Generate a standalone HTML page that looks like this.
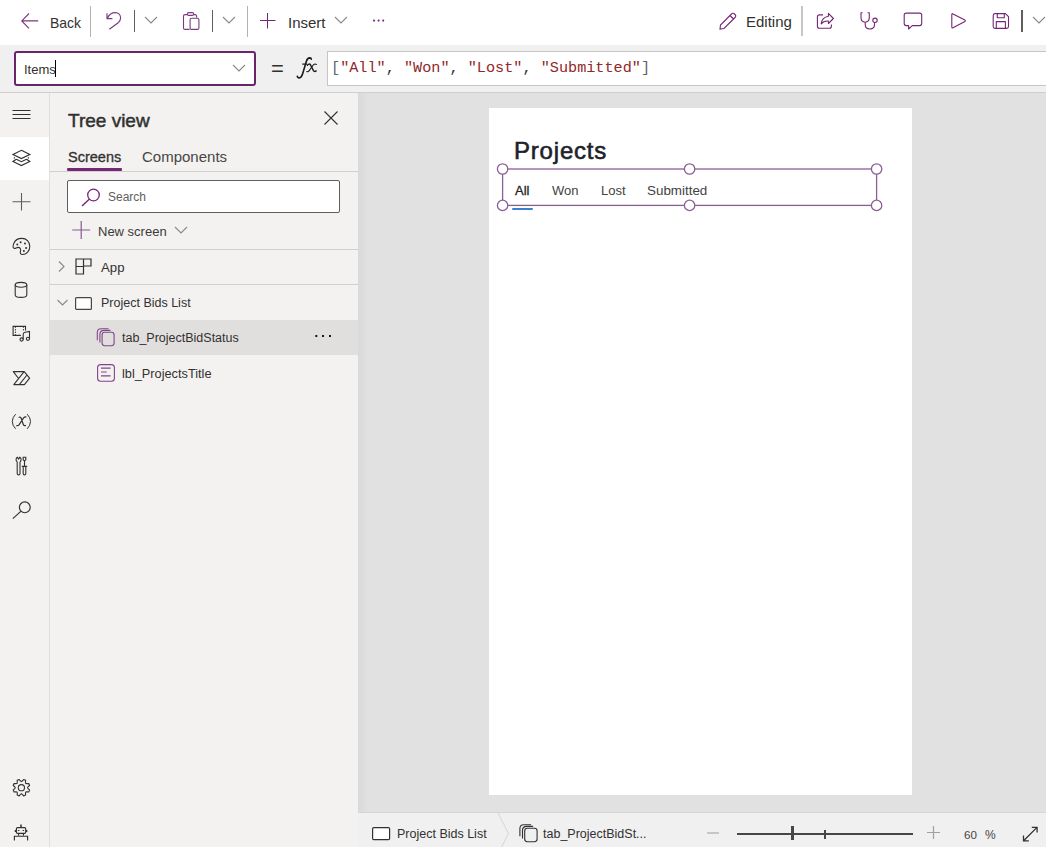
<!DOCTYPE html>
<html><head><meta charset="utf-8">
<style>
*{margin:0;padding:0;box-sizing:border-box}
html,body{width:1046px;height:847px;overflow:hidden;background:#fff;font-family:"Liberation Sans",sans-serif;color:#323130}
.a{position:absolute}
.t{position:absolute;white-space:nowrap;line-height:1}
svg{position:absolute;overflow:visible}
#top{left:0;top:0;width:1046px;height:45px;background:#fff}
#fbar{left:0;top:45px;width:1046px;height:48px;background:#f0f0f0;border-bottom:1px solid #cfcfcf;z-index:2}
#rail{left:0;top:92px;width:50px;height:755px;background:#f3f2f1;border-right:1px solid #e1dfdd}
#tree{left:50px;top:92px;width:308px;height:755px;background:#f3f2f1}
#canvas{left:358px;top:92px;width:688px;height:721px;background:#e1e1e1}
#status{left:358px;top:812px;width:688px;height:35px;background:#f0f0f0;border-top:1px solid #d6d6d6}
.div{position:absolute;width:1px;background:#c8c6c4}
</style></head><body>
<div id="top" class="a">
  <!-- back arrow -->
  <svg style="left:0;top:0" width="40" height="40"><path d="M29 13.5 L21.8 20.9 L29 28.3 M22 20.9 H38.2" fill="none" stroke="#7a3a7f" stroke-width="1.15"/></svg>
  <div class="t" style="left:50px;top:15px;font-size:15px;transform:scaleX(0.93);transform-origin:0 0">Back</div>
  <div class="div" style="left:90px;top:6px;height:31px;background:#b5b3b1"></div>
  <!-- undo -->
  <svg style="left:0;top:0" width="130" height="40"><path d="M107 13.2 V18.6 H112.4 M107.4 18.2 C109 14.5 112 12.6 115.5 12.6 C118.5 12.6 120.6 15 120.6 18 C120.6 20 119.6 21.5 118.2 22.8 L109.3 29.3" fill="none" stroke="#7a3a7f" stroke-width="1.15"/></svg>
  <div class="div" style="left:134px;top:10px;height:22px;background:#605e5c"></div>
  <svg style="left:144px;top:16px" width="14" height="8" viewBox="0 0 14 8"><path d="M1 1 L7 7 L13 1" fill="none" stroke="#8a8886" stroke-width="1.1"/></svg>
  <!-- clipboard -->
  <svg style="left:0;top:0" width="210" height="40"><path d="M187.2 14.6 H185 Q183.5 14.6 183.5 16.1 V27.9 Q183.5 29.4 185 29.4 H189.5 M193.8 14.6 H195 Q196.6 14.6 196.6 16.1 V17.5 M188.6 12.6 H192.4 Q193.6 12.6 193.6 13.8 V14.2 Q193.6 15.4 192.4 15.4 H188.6 Q187.4 15.4 187.4 14.2 V13.8 Q187.4 12.6 188.6 12.6 Z M191.5 18.3 H197.5 Q198.9 18.3 198.9 19.7 V28 Q198.9 29.4 197.5 29.4 H191.5 Q190.1 29.4 190.1 28 V19.7 Q190.1 18.3 191.5 18.3 Z" fill="none" stroke="#7a3a7f" stroke-width="1.1"/></svg>
  <div class="div" style="left:212px;top:10px;height:22px;background:#605e5c"></div>
  <svg style="left:222px;top:16px" width="14" height="8" viewBox="0 0 14 8"><path d="M1 1 L7 7 L13 1" fill="none" stroke="#8a8886" stroke-width="1.1"/></svg>
  <div class="div" style="left:247px;top:6px;height:31px;background:#b5b3b1"></div>
  <!-- plus -->
  <svg style="left:260px;top:13px" width="16" height="16" viewBox="0 0 16 16"><path d="M7.5 0 V15.5 M0 7.5 H15.5" fill="none" stroke="#742774" stroke-width="1.05"/></svg>
  <div class="t" style="left:288px;top:15px;font-size:15px">Insert</div>
  <svg style="left:334px;top:16px" width="14" height="8" viewBox="0 0 14 8"><path d="M1 1 L7 7 L13 1" fill="none" stroke="#8a8886" stroke-width="1.1"/></svg>
  <svg style="left:0;top:0" width="400" height="40"><g fill="#742774"><circle cx="374" cy="20.6" r="1.05"/><circle cx="378.6" cy="20.6" r="1.05"/><circle cx="383.2" cy="20.6" r="1.05"/></g></svg>
  <!-- right -->
  <svg style="left:719px;top:12px" width="18" height="18" viewBox="0 0 18 18"><path d="M12.5 2 Q14 0.5 15.5 2 L16 2.5 Q17.5 4 16 5.5 L5 16.5 L1 17 L1.5 13 Z M11 3.5 L14.5 7" fill="none" stroke="#742774" stroke-width="1.1"/></svg>
  <div class="t" style="left:746px;top:14px;font-size:15px">Editing</div>
  <div class="div" style="left:801px;top:6px;height:30px;background:#c8c6c4;width:2px"></div>
  <!-- share / stethoscope / comment / play / save -->
  <svg style="left:0;top:0" width="1046" height="45" fill="none" stroke="#742774" stroke-width="1.1" stroke-linejoin="round">
    <path d="M823 14.9 H819.4 Q817.4 14.9 817.4 16.9 V26.3 Q817.4 28.3 819.4 28.3 H829.4 Q831.4 28.3 831.4 26.3 V24.4"/>
    <path d="M828.4 13.4 L833.4 18.5 L828.4 23.5 V21 Q823.8 20.6 821.2 23.8 Q822 17.4 828.4 16.3 Z"/>
    <path d="M862.6 12.7 H861 V17.6 Q861 22.2 865.2 22.2 Q869.3 22.2 869.3 17.6 V12.7 H867.6"/>
    <path d="M865.2 22.2 V24.6 Q865.2 29 869.8 29 Q874.5 29 874.5 24.6 V22.6"/>
    <circle cx="875" cy="20.3" r="2.2"/>
    <path d="M906.2 13.1 H919.7 Q921.7 13.1 921.7 15.1 V23.6 Q921.7 25.6 919.7 25.6 H912.3 L908.6 29 V25.6 H906.2 Q904.2 25.6 904.2 23.6 V15.1 Q904.2 13.1 906.2 13.1 Z"/>
    <path d="M951.8 14.6 Q951.8 13.2 953 13.9 L964.9 20.1 Q965.9 20.8 964.9 21.5 L953 27.8 Q951.8 28.5 951.8 27.1 Z"/>
    <path d="M995.1 13.6 H1005.4 L1008.5 16.7 V26.5 Q1008.5 28.4 1006.6 28.4 H995.1 Q993.2 28.4 993.2 26.5 V15.5 Q993.2 13.6 995.1 13.6 Z M997.3 13.6 V17.8 H1004.3 V13.6 M996.3 28.4 V21.6 H1005.4 V28.4"/>
  </svg>
  <div class="div" style="left:1021px;top:10px;height:22px;background:#605e5c;width:2px"></div>
  <svg style="left:1032px;top:16px" width="14" height="8" viewBox="0 0 14 8"><path d="M1 1 L7 7 L13 1" fill="none" stroke="#8a8886" stroke-width="1.1"/></svg>
</div>

<div id="fbar" class="a">
  <div class="a" style="left:14px;top:6px;width:242px;height:35px;border:2px solid #6a246c;border-radius:3px;background:#fff"></div>
  <div class="t" style="left:24px;top:18px;font-size:13px;color:#323130">Items</div>
  <div class="a" style="left:55px;top:15px;width:1px;height:17px;background:#000"></div>
  <svg style="left:232px;top:19px" width="14" height="8" viewBox="0 0 14 8"><path d="M1 1 L7 7 L13 1" fill="none" stroke="#8a8886" stroke-width="1.1"/></svg>
  <div class="t" style="left:271px;top:13px;font-size:22px;color:#323130">=</div>
  <svg style="left:0;top:-45px" width="330" height="90" fill="none" stroke="#1b1a19">
    <path d="M297.3 76.2 Q297.6 78.3 299.8 77.8 Q301.6 77.2 302.8 73.2 L306.3 61.5 Q307.4 57.9 309.8 57.9 Q311.2 58 311.3 59.3" stroke-width="1.6" stroke-linecap="round"/>
    <path d="M302.2 64.1 H307.3" stroke-width="1.2"/>
    <path d="M307.4 65.2 Q309.1 63.3 310.4 64.6 L313.3 70.4 Q314.4 72.2 316.2 70.9" stroke-width="1.4" stroke-linecap="round"/>
    <path d="M316.4 64.5 Q315 63.3 313.4 64.8 L309.2 70.6 Q308.1 72.2 306.8 71.5" stroke-width="1.1" stroke-linecap="round"/>
  </svg>
  <div class="a" style="left:327px;top:6px;width:730px;height:35px;background:#fff;border:1px solid #c8c6c4"></div>
  <div class="t" style="left:331px;top:16px;font-size:15.2px;font-family:'Liberation Mono',monospace;color:#922828"><span style="color:#5c6670">[</span>"All"<span style="color:#323130">, </span>"Won"<span style="color:#323130">, </span>"Lost"<span style="color:#323130">, </span>"Submitted"<span style="color:#5c6670">]</span></div>
</div>

<div id="rail" class="a">
  <div class="a" style="left:0;top:45px;width:49px;height:43px;background:#fff"></div>
</div>
<svg style="left:0;top:0" width="50" height="847" fill="none" stroke="#323130" stroke-width="1.1">
  <!-- hamburger -->
  <path d="M12.5 110.5 H30.5 M12.5 114.5 H30.5 M12.5 118.5 H30.5" stroke-width="1"/>
  <!-- layers -->
  <path d="M21.4 150.3 L29.8 154.4 L21.4 158.5 L13 154.4 Z" stroke-width="1.15"/>
  <path d="M16.3 159.3 L13 161.4 L21.4 165.5 L29.8 161.4 L26.5 159.3 M16.3 159.3 L21.4 161.7 L26.5 159.3" stroke-width="1.15"/>
  <path d="M14.4 157.3 V158.6 M28.4 157.3 V158.6" stroke-width="1.2"/>
  <!-- plus -->
  <path d="M21.5 193 V210.6 M12.5 201.8 H30.5" stroke="#5f5e5c" stroke-width="1.1"/>
  <!-- palette -->
  <path d="M21.9 238.4 C26.4 238.4 29.8 241.8 29.8 246.4 C29.8 250.9 26.5 254.5 22.5 254.5 C20.6 254.5 19.9 253.6 20.4 251.5 C21 249.5 20.6 247.8 18.4 247.4 C16.6 247.1 15.5 248.9 14 248.3 C12.8 247.8 13.2 245 13.8 243.5 C15 240.3 18.2 238.4 21.9 238.4 Z"/>
  <g fill="#323130" stroke="none"><circle cx="17.3" cy="244.4" r="1"/><circle cx="20.6" cy="242.2" r="1"/><circle cx="25" cy="243.4" r="1"/><circle cx="26.1" cy="247.9" r="1"/><circle cx="23.9" cy="251" r="1"/></g>
  <!-- database -->
  <ellipse cx="21" cy="284.8" rx="5.8" ry="2.4"/>
  <path d="M15.2 284.8 V295 C15.2 296.6 17.8 297.4 21 297.4 C24.2 297.4 26.8 296.6 26.8 295 V284.8"/>
  <!-- media -->
  <path d="M20.9 335.4 H13.1 V326.4 H25.5 V330.6"/>
  <path d="M15.4 326.4 V335.4 M23.4 326.4 V330.6" stroke-dasharray="1.4 1.2" stroke-width="1"/>
  <path d="M23.2 339.5 V334.2 Q23.4 332.6 25 332.3 L29.5 331.5 V338.8"/>
  <circle cx="21.6" cy="339.5" r="1.6"/><circle cx="27.9" cy="338.8" r="1.6"/>
  <!-- power automate -->
  <path d="M18.2 378 L13.3 371.6 H24.2 L29.6 378.1 L24.4 384.6 H13.8 L24.1 371.7 M27 375 L19.3 384.6" stroke-linejoin="round"/>
  <!-- (x) -->
  <path d="M15.6 414.2 Q12.3 417.6 12.3 421.5 Q12.3 425.4 15.6 428.8 M27.2 414.2 Q30.5 417.6 30.5 421.5 Q30.5 425.4 27.2 428.8" stroke-width="1"/>
  <path d="M18.7 417.6 Q19.9 416.4 20.9 417.6 L23.5 424.9 Q24.3 426.2 25.9 425.4 M26.5 417.2 Q25 416.3 23.6 417.9 L19.2 424.6 Q18 426.2 16.3 425.5" stroke-width="1.2"/>
  <!-- tools -->
  <path d="M17.2 461.8 C15.7 461 15.6 458.1 17.4 457.3 L18.6 459.1 L19.8 457.3 C21.6 458.1 21.5 461 20 461.8 M17.2 461.8 V473.5 Q17.2 474.9 18.6 474.9 Q20 474.9 20 473.5 V461.8"/>
  <path d="M23.2 457.3 H25.8 V459.8 L24.5 461 L23.2 459.8 Z M24.5 461 V466.3 M21.8 466.4 H27.2 M23.2 466.4 V473.5 Q23.2 474.9 24.5 474.9 Q25.8 474.9 25.8 473.5 V466.4"/>
  <!-- search -->
  <circle cx="24.8" cy="507.3" r="5.4" stroke-width="1.15"/>
  <path d="M20.8 511.3 L12.8 518.6" stroke-width="1.15"/>
  <!-- gear -->
  <circle cx="21.4" cy="787.7" r="3.1"/>
  <path d="M28.30 788.86 L29.61 789.90 L28.76 791.95 L27.10 791.76 L25.71 792.01 L25.46 793.40 L25.65 795.06 L23.60 795.91 L22.56 794.60 L21.40 793.80 L20.24 794.60 L19.20 795.91 L17.15 795.06 L17.34 793.40 L17.09 792.01 L15.70 791.76 L14.04 791.95 L13.19 789.90 L14.50 788.86 L15.30 787.70 L14.50 786.54 L13.19 785.50 L14.04 783.45 L15.70 783.64 L17.09 783.39 L17.34 782.00 L17.15 780.34 L19.20 779.49 L20.24 780.80 L21.40 781.60 L22.56 780.80 L23.60 779.49 L25.65 780.34 L25.46 782.00 L25.71 783.39 L27.10 783.64 L28.76 783.45 L29.61 785.50 L28.30 786.54 L27.50 787.70 Z" stroke-linejoin="round"/>
  <!-- bot -->
  <path d="M21 824.4 V827.2" stroke-width="1.5"/>
  <rect x="16.4" y="827.6" width="9.3" height="5.8" rx="1.2" stroke-width="1.15"/>
  <path d="M17.9 830.5 H19.4 M22.6 830.5 H24.1" stroke-width="1"/>
  <path d="M15.4 829.9 V831.9 M26.7 829.9 V831.9" stroke-width="1.3"/>
  <path d="M18.6 833.4 V835.6 M23.4 833.4 V835.6 M14.4 840.6 V836.2 H27.6 V840.6" stroke-width="1.15"/>
</svg>

<div id="tree" class="a">
  <div class="t" style="left:18px;top:19px;font-size:19px;-webkit-text-stroke:0.5px #323130;color:#323130">Tree view</div>
  <svg style="left:274px;top:19px" width="14" height="14" viewBox="0 0 14 14"><path d="M0.5 0.5 L13.5 13.5 M13.5 0.5 L0.5 13.5" fill="none" stroke="#323130" stroke-width="1.1"/></svg>
  <div class="t" style="left:18px;top:58px;font-size:14.5px;-webkit-text-stroke:0.3px #323130;color:#323130">Screens</div>
  <div class="t" style="left:92px;top:57px;font-size:15px;color:#484644">Components</div>
  <div class="a" style="left:17px;top:76px;width:55px;height:3px;background:#742774;border-radius:1px"></div>
  <div class="a" style="left:0;top:79px;width:308px;height:1px;background:#d2d0ce"></div>
  <div class="a" style="left:17px;top:88px;width:273px;height:33px;background:#fff;border:1px solid #605e5c;border-radius:2px"></div>
  <svg style="left:31px;top:96px" width="20" height="19" viewBox="0 0 20 19"><circle cx="12.5" cy="7" r="5.8" fill="none" stroke="#742774" stroke-width="1.3"/><path d="M8.5 11 L1 18" fill="none" stroke="#742774" stroke-width="1.4"/></svg>
  <div class="t" style="left:58px;top:99px;font-size:12px;color:#605e5c">Search</div>
  <svg style="left:-50px;top:-92px" width="300" height="300"><path d="M81.2 221 V239 M72.2 230 H90.2" fill="none" stroke="#8a5a94" stroke-width="1.2"/></svg>
  <div class="t" style="left:48px;top:133px;font-size:13px;color:#3b3a39">New screen</div>
  <svg style="left:124px;top:134px" width="14" height="8" viewBox="0 0 14 8"><path d="M1 1 L7 7 L13 1" fill="none" stroke="#8a8886" stroke-width="1.1"/></svg>
  <div class="a" style="left:0;top:157px;width:308px;height:1px;background:#d2d0ce"></div>
  <!-- App row -->
  <svg style="left:8px;top:169px" width="7" height="11" viewBox="0 0 7 11"><path d="M1 0.5 L6 5.5 L1 10.5" fill="none" stroke="#8a8886" stroke-width="1.1"/></svg>
  <svg style="left:25px;top:166px" width="17" height="17" viewBox="0 0 17 17"><path d="M1 1 H16 V8 H8.5 V16 H1 Z M8.5 1 V8.5 M1 8.5 H8.5" fill="none" stroke="#323130" stroke-width="1.2"/></svg>
  <div class="t" style="left:51px;top:169px;font-size:13.2px;color:#323130">App</div>
  <div class="a" style="left:0;top:192px;width:308px;height:1px;background:#d2d0ce"></div>
  <!-- Project Bids List -->
  <svg style="left:7px;top:207px" width="11" height="7" viewBox="0 0 11 7"><path d="M0.5 1 L5.5 6 L10.5 1" fill="none" stroke="#8a8886" stroke-width="1.1"/></svg>
  <svg style="left:25px;top:205px" width="17" height="13" viewBox="0 0 17 13"><rect x="0.6" y="0.6" width="15.8" height="11.8" rx="1" fill="#fff" stroke="#484644" stroke-width="1.2"/></svg>
  <div class="t" style="left:51px;top:205px;font-size:12.5px;color:#323130">Project Bids List</div>
  <div class="a" style="left:0;top:228px;width:308px;height:35px;background:#e1dfdd"></div>
  <svg style="left:-50px;top:-92px" width="400" height="500" fill="none" stroke="#80468a" stroke-width="1.1">
    <rect x="102.1" y="332.3" width="12" height="13.4" rx="2.6"/>
    <path d="M99.9 342.5 V334.5 Q99.9 330.4 104 330.4 H110.5"/>
    <path d="M97.3 340.3 V332.5 Q97.3 328.7 101.2 328.7 H108.5"/>
  </svg>
  <div class="t" style="left:72px;top:240px;font-size:12.5px;color:#323130">tab_ProjectBidStatus</div>
  <svg style="left:-50px;top:-92px" width="400" height="500"><g fill="#1b1a19"><rect x="315.3" y="335" width="2" height="2"/><rect x="322" y="335" width="2" height="2"/><rect x="329" y="335" width="2" height="2"/></g></svg>
  <svg style="left:-50px;top:-92px" width="400" height="500" fill="none" stroke="#80468a" stroke-width="1.1">
    <rect x="97.6" y="364.6" width="16.8" height="16.6" rx="3"/>
    <path d="M101 368.1 H110.6 M101 372 H106.7 M101 375.9 H110.6"/>
  </svg>
  <div class="t" style="left:72px;top:276px;font-size:12.75px;color:#323130">lbl_ProjectsTitle</div>
</div>

<div id="canvas" class="a">
  <div class="a" style="left:0;top:0;width:10px;height:721px;background:linear-gradient(to right,rgba(0,0,0,0.035),rgba(0,0,0,0))"></div>
  <div class="a" style="left:131px;top:16px;width:423px;height:687px;background:#fff"></div>
  <div class="t" style="left:156px;top:47px;font-size:24px;letter-spacing:0.8px;-webkit-text-stroke:0.6px #201f2a;color:#201f2a">Projects</div>
  
  <div class="t" style="left:157px;top:92px;font-size:13px;-webkit-text-stroke:0.3px #242424;color:#242424">All</div>
  <div class="t" style="left:194px;top:92px;font-size:13px;color:#424242">Won</div>
  <div class="t" style="left:243px;top:92px;font-size:13px;color:#424242">Lost</div>
  <div class="t" style="left:289px;top:92px;font-size:13.4px;color:#424242">Submitted</div>
  <div class="a" style="left:154px;top:116px;width:21px;height:2px;background:#3b7fd0;border-radius:1px"></div>
</div>
<svg style="left:0;top:0" width="1046" height="847">
  <rect x="502.6" y="169" width="374" height="36.4" fill="none" stroke="#8b5f95" stroke-width="1.3"/>
  <g fill="#fff" stroke="#8b5f95" stroke-width="1.3">
    <circle cx="502.6" cy="169" r="5.2"/><circle cx="689.6" cy="169" r="5.2"/><circle cx="876.6" cy="169" r="5.2"/>
    <circle cx="502.6" cy="205.4" r="5.2"/><circle cx="689.6" cy="205.4" r="5.2"/><circle cx="876.6" cy="205.4" r="5.2"/>
  </g>
</svg>

<div id="status" class="a">
  <svg style="left:14px;top:14px" width="19" height="14" viewBox="0 0 19 14"><rect x="0.6" y="0.6" width="17" height="12" rx="1.2" fill="#fff" stroke="#323130" stroke-width="1.2"/></svg>
  <div class="t" style="left:39px;top:15px;font-size:12.5px;color:#323130">Project Bids List</div>
  <svg style="left:140px;top:0" width="12" height="34" viewBox="0 0 12 34"><path d="M0 0 L10.5 20.5 L0 41" fill="none" stroke="#d6d6d6" stroke-width="1"/></svg>
  <svg style="left:-358px;top:-813px" width="1046" height="847" fill="none" stroke="#323130" stroke-width="1.1">
    <rect x="524.7" y="828.3" width="12.4" height="13.4" rx="2.6"/>
    <path d="M522.5 838.5 V830.5 Q522.5 826.4 526.6 826.4 H533.1"/>
    <path d="M519.9 836.3 V828.5 Q519.9 824.7 523.8 824.7 H531.1"/>
  </svg>
  <div class="t" style="left:185px;top:15px;font-size:12.5px;color:#323130">tab_ProjectBidSt...</div>
  <div class="a" style="left:349px;top:19px;width:12px;height:2px;background:#c8c6c4"></div>
  <div class="a" style="left:379px;top:20px;width:176px;height:2px;background:#484644"></div>
  <div class="a" style="left:433px;top:13px;width:3px;height:14px;background:#484644"></div>
  <div class="a" style="left:466px;top:17px;width:2px;height:9px;background:#484644"></div>
  <svg style="left:569px;top:13px" width="13" height="13" viewBox="0 0 13 13"><path d="M6.5 0 V13 M0 6.5 H13" fill="none" stroke="#a19f9d" stroke-width="1.2"/></svg>
  <div class="t" style="left:606px;top:16px;font-size:11.6px;color:#484644">60</div>
  <div class="t" style="left:627px;top:16px;font-size:12px;color:#484644">%</div>
  <svg style="left:664px;top:13px" width="16" height="16" viewBox="0 0 16 16"><path d="M1.6 14.8 L15 1.4 M9.8 1.3 H15.1 V6.6 M1.5 9.6 V14.9 H6.8" fill="none" stroke="#323130" stroke-width="1.25"/></svg>
</div>
</body></html>
